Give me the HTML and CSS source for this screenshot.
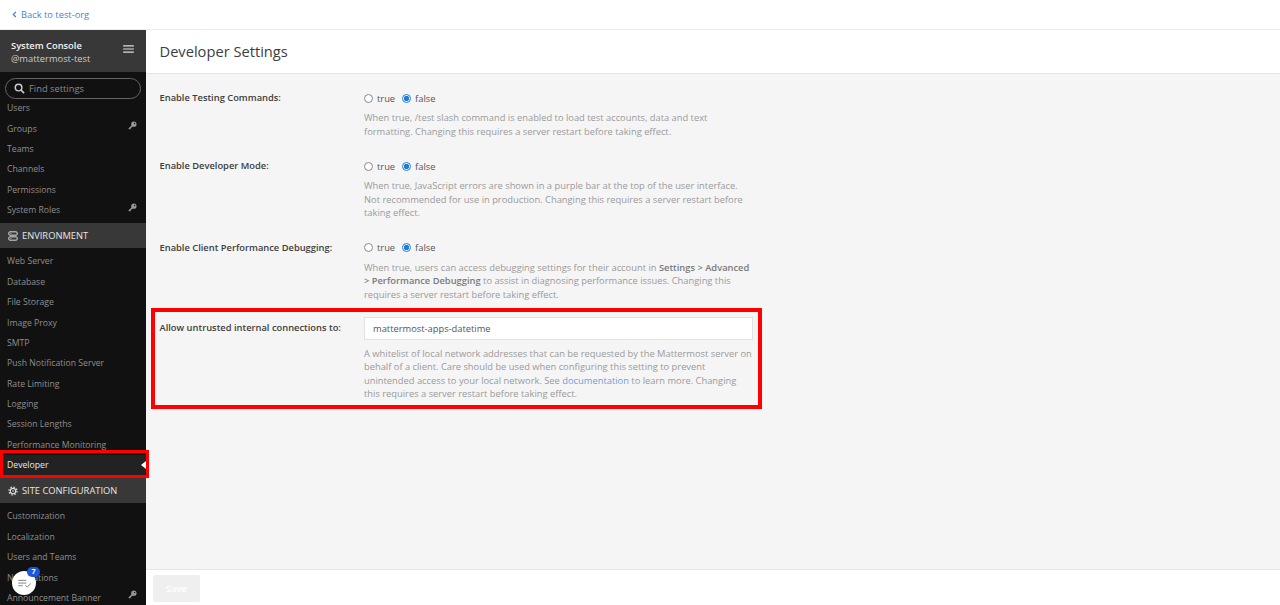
FILE: index.html
```html
<!DOCTYPE html>
<html lang="en">
<head>
<meta charset="utf-8">
<title>Developer Settings</title>
<link rel="stylesheet" href="styles.css">
</head>
<body>
<header class="topbar">
  <a class="back" href="#"><svg class="chev" viewBox="0 0 6 8"><path d="M4.6 1 1.6 4l3 3" fill="none" stroke="#4a7fd6" stroke-width="1.5"/></svg>Back to test-org</a>
</header>
<div class="app">
  <aside class="sidebar">
    <div class="brand">
      <div>
        <div class="brand-title">System Console</div>
        <div class="brand-user">@mattermost-test</div>
      </div>
      <svg class="burger" viewBox="0 0 12 9"><path d="M0 1h12M0 4.500h12M0 8h12" stroke="#ddd" stroke-width="1.400"/></svg>
    </div>
    <div class="search">
      <div class="search-box">
        <svg class="search-icon" viewBox="0 0 12 12"><circle cx="5" cy="5" r="3.600" fill="none" stroke="#ccc" stroke-width="1.600"/><path d="m7.600 7.600 3.400 3.400" stroke="#ccc" stroke-width="1.800"/></svg>
        <span>Find settings</span>
      </div>
    </div>
    <nav class="nav">
      <a class="item" href="#">Users</a>
      <a class="item" href="#">Groups<svg class="key" viewBox="0 0 10 10"><circle cx="6.500" cy="3.500" r="2.900" fill="#999"/><circle cx="7.300" cy="2.700" r=".8" fill="#111"/><path d="M5 5 1 9" stroke="#999" stroke-width="1.600"/><path d="m2 8 1.200 1.200" stroke="#999"/></svg></a>
      <a class="item" href="#">Teams</a>
      <a class="item" href="#">Channels</a>
      <a class="item" href="#">Permissions</a>
      <a class="item" href="#">System Roles<svg class="key" viewBox="0 0 10 10"><circle cx="6.500" cy="3.500" r="2.900" fill="#999"/><circle cx="7.300" cy="2.700" r=".8" fill="#111"/><path d="M5 5 1 9" stroke="#999" stroke-width="1.600"/><path d="m2 8 1.200 1.200" stroke="#999"/></svg></a>
      <div class="section"><svg class="sec-icon" viewBox="0 0 12 12"><rect x="1" y="1" width="10" height="4" rx="1" fill="none" stroke="#ddd" stroke-width="1.200"/><rect x="1" y="7" width="10" height="4" rx="1" fill="none" stroke="#ddd" stroke-width="1.200"/><path d="M3 3h1M3 9h1" stroke="#ddd"/></svg>ENVIRONMENT</div>
      <a class="item" href="#">Web Server</a>
      <a class="item" href="#">Database</a>
      <a class="item" href="#">File Storage</a>
      <a class="item" href="#">Image Proxy</a>
      <a class="item" href="#">SMTP</a>
      <a class="item" href="#">Push Notification Server</a>
      <a class="item" href="#">Rate Limiting</a>
      <a class="item" href="#">Logging</a>
      <a class="item" href="#">Session Lengths</a>
      <a class="item" href="#">Performance Monitoring</a>
      <a class="item active" href="#">Developer</a>
      <div class="section"><svg class="sec-icon" viewBox="0 0 12 12"><circle cx="6" cy="6" r="3.200" fill="none" stroke="#ddd" stroke-width="1.300"/><circle cx="6" cy="6" r="4.800" fill="none" stroke="#ddd" stroke-width="1.500" stroke-dasharray="1.800 1.970"/><circle cx="6" cy="6" r="1" fill="#ddd"/></svg>SITE CONFIGURATION</div>
      <a class="item" href="#">Customization</a>
      <a class="item" href="#">Localization</a>
      <a class="item" href="#">Users and Teams</a>
      <a class="item" href="#">Notifications</a>
      <a class="item" href="#">Announcement Banner<svg class="key" viewBox="0 0 10 10"><circle cx="6.500" cy="3.500" r="2.900" fill="#999"/><circle cx="7.300" cy="2.700" r=".8" fill="#111"/><path d="M5 5 1 9" stroke="#999" stroke-width="1.600"/><path d="m2 8 1.200 1.200" stroke="#999"/></svg></a>
    </nav>
    <div class="mark mark-nav"></div>
    <div class="bubble">
      <svg class="bubble-icon" viewBox="0 0 14 10"><path d="M0 1.500h9M0 4.500h9M0 7.500h5" stroke="#777" stroke-width="1"/><path d="m8 7 2 2 4-4" fill="none" stroke="#777" stroke-width="1"/></svg>
      <span class="badge">7</span>
    </div>
  </aside>
  <main class="main">
    <div class="title-bar"><h1>Developer Settings</h1></div>
    <div class="content">
      <section class="row">
        <div class="label">Enable Testing Commands:</div>
        <div class="field">
          <div class="radios"><span class="radio"></span><span class="opt">true</span><span class="radio on"></span><span>false</span></div>
          <p class="help">When true, /test slash command is enabled to load test accounts, data and text formatting. Changing this requires a server restart before taking effect.</p>
        </div>
      </section>
      <section class="row">
        <div class="label">Enable Developer Mode:</div>
        <div class="field">
          <div class="radios"><span class="radio"></span><span class="opt">true</span><span class="radio on"></span><span>false</span></div>
          <p class="help">When true, JavaScript errors are shown in a purple bar at the top of the user interface. Not recommended for use in production. Changing this requires a server restart before taking effect.</p>
        </div>
      </section>
      <section class="row">
        <div class="label">Enable Client Performance Debugging:</div>
        <div class="field">
          <div class="radios"><span class="radio"></span><span class="opt">true</span><span class="radio on"></span><span>false</span></div>
          <p class="help">When true, users can access debugging settings for their account in <b>Settings &gt; Advanced &gt; Performance Debugging</b> to assist in diagnosing performance issues. Changing this requires a server restart before taking effect.</p>
        </div>
      </section>
      <section class="row row-input">
        <div class="label label-input">Allow untrusted internal connections to:</div>
        <div class="field">
          <div class="input">mattermost-apps-datetime</div>
          <p class="help help-input">A whitelist of local network addresses that can be requested by the Mattermost server on behalf of a client. Care should be used when configuring this setting to prevent unintended access to your local network. See <a href="#">documentation</a> to learn more. Changing this requires a server restart before taking effect.</p>
        </div>
        <div class="mark mark-row"></div>
      </section>
    </div>
    <footer class="footer"><button class="save" type="button">Save</button></footer>
  </main>
</div>
</body>
</html>
```
FILE: styles.css
```css
* { box-sizing: border-box; }
html, body { margin: 0; height: 100%; overflow: hidden; }
body { font-family: "Open Sans", "Liberation Sans", sans-serif; font-size: 9.330px; background: #fff; color: #3d3d3d; display: flex; flex-direction: column; }
a { text-decoration: none; }

.topbar { height: 30px; flex: none; background: #fff; border-bottom: 1px solid #ededed; display: flex; align-items: center; padding-left: 12px; }
.back { color: #4a7fd6; font-size: 9.330px; display: flex; align-items: center; gap: 4px; }
.chev { width: 5px; height: 7px; }

.app { flex: 1; display: flex; min-height: 0; }
.sidebar { width: 146px; flex: none; background: #111; position: relative; display: flex; flex-direction: column; }
.brand { height: 42px; flex: none; background: #383838; padding: 9px 12px 0 11px; display: flex; justify-content: space-between; color: #eee; }
.brand-title { font-size: 9.330px; font-weight: 600; line-height: 13px; color: #f2f2f2; }
.brand-user { font-size: 9.330px; line-height: 14px; color: #ccc; }
.burger { width: 11px; height: 8px; margin-top: 6px; }

.search { height: 26px; flex: none; padding: 6px 5px 0; background: #111; }
.search-box { height: 20.500px; width: 136px; border: 1px solid #666; border-radius: 11px; display: flex; align-items: center; padding-left: 8px; gap: 4px; color: #8a8a8a; font-size: 9.330px; background: #111; }
.search-icon { width: 11px; height: 11px; }

.nav { display: flex; flex-direction: column; overflow: hidden; flex: 1; }
.item { height: 20.400px; flex: none; display: flex; align-items: center; justify-content: space-between; padding: 0 9px 0 7px; color: #8f8f8f; font-size: 8.670px; position: relative; }
.key { width: 9px; height: 9px; margin-top: -6px; }
.section { height: 25px; flex: none; margin: 2.800px 0 3px; background: #383838; color: #e6e6e6; font-size: 9.330px; display: flex; align-items: center; gap: 4px; padding-left: 8px; }
.sec-icon { width: 10px; height: 10px; }
.item.active { background: #222; color: #e8e8e8; }
.item.active::after { content: ""; position: absolute; right: 0; top: 6px; border: 4px solid transparent; border-right: 5px solid #fff; border-left: 0; }

.mark { position: absolute; border: 3px solid #f00; pointer-events: none; }
.mark-nav { left: 0; top: 420px; width: 149px; height: 28px; }

.bubble { position: absolute; left: 12px; top: 541px; width: 24px; height: 24px; border-radius: 50%; background: #fff; display: flex; align-items: center; justify-content: center; }
.bubble-icon { width: 13px; height: 9px; }
.badge { position: absolute; left: 15px; top: -4px; width: 13px; height: 10px; border-radius: 6px; background: #1c58d9; color: #fff; font-size: 7px; font-weight: 700; line-height: 10px; text-align: center; }

.main { flex: 1; display: flex; flex-direction: column; min-width: 0; }
.title-bar { height: 43.500px; flex: none; background: #fff; border-bottom: 1px solid #e6e6e6; display: flex; align-items: center; padding-left: 13.500px; }
h1 { margin: 0; font-size: 14.670px; font-weight: 400; color: #3d3d3d; }
.content { flex: 1; background: #f5f5f5; padding: 17.500px 0 0 13.500px; min-height: 0; }

.row { display: flex; margin-bottom: 21px; width: 594px; position: relative; }
.label { width: 204.500px; flex: none; font-weight: 600; font-size: 9.330px; line-height: 14px; color: #3d3d3d; }
.field { width: 389px; flex: none; }
.radios { display: flex; align-items: center; height: 14px; font-size: 9.330px; color: #555; }
.radio { width: 9px; height: 9px; border-radius: 50%; border: 1px solid #8a8a8a; background: #fff; margin-right: 4px; }
.radio.on { border-color: #1c7ce0; background: radial-gradient(circle, #1c7ce0 0 2.500px, #fff 3px); }
.opt { margin-right: 7px; }
.help { margin: 6px 0 0; font-size: 9.330px; line-height: 13.500px; color: #9a9a9a; }
.help b { font-weight: 600; color: #7a7a7a; }
.help a { color: #6a9fe0; }

.row-input { margin-top: -5px; }
.label-input { padding-top: 4px; }
.input { height: 23px; background: #fff; border: 1px solid #e2e2e2; padding-left: 8px; display: flex; align-items: center; font-size: 9.330px; color: #555; }
.help-input { margin-top: 6.500px; }
.mark-row { left: -8.500px; top: -9px; width: 611px; height: 101px; border-width: 4px; }

.footer { height: 36px; flex: none; background: #fff; border-top: 1px solid #e6e6e6; padding: 5px 0 0 7px; }
.save { width: 47px; height: 27px; border: 0; border-radius: 2px; background: #efefef; color: #fff; font-family: inherit; font-size: 9.330px; font-weight: 600; }
```
